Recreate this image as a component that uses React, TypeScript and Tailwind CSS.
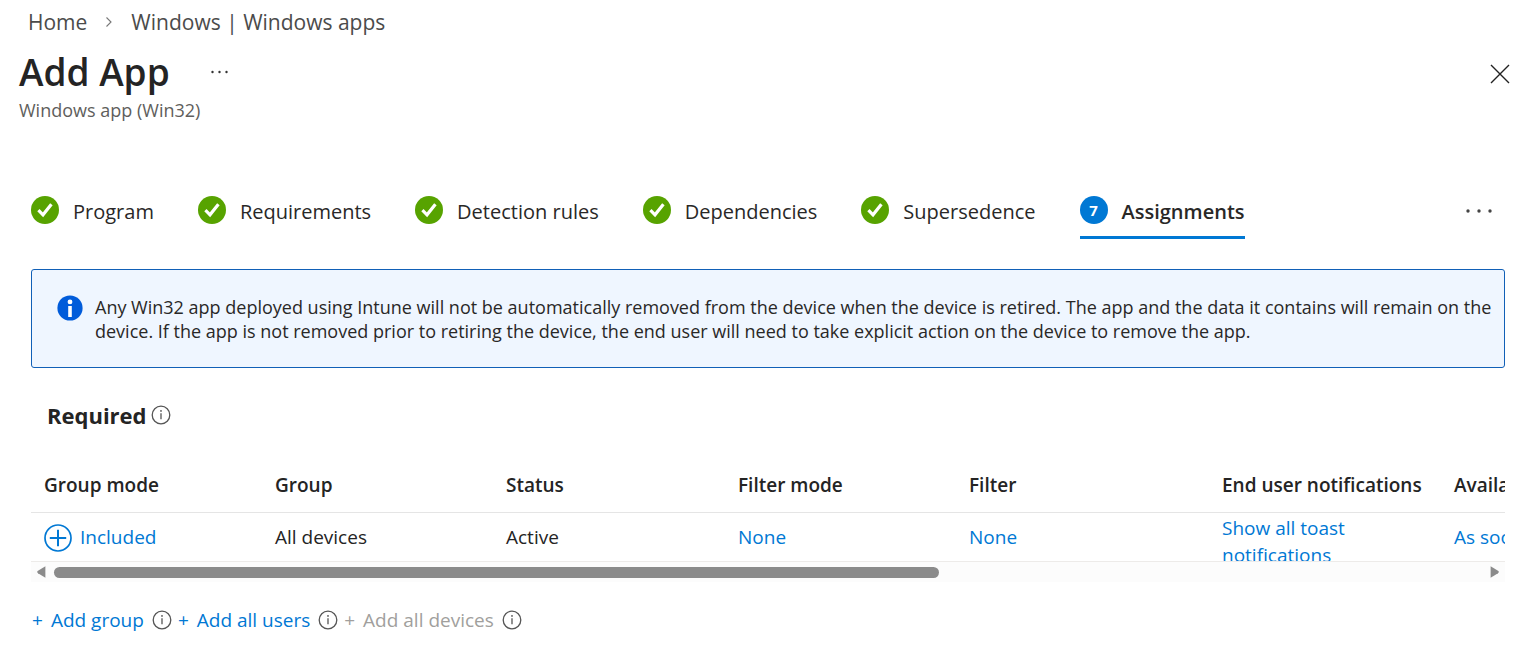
import clsx from 'clsx'

const completedSteps = [
  'Program',
  'Requirements',
  'Detection rules',
  'Dependencies',
  'Supersedence',
]

const columns = [
  { title: 'Group mode', width: 'w-[231px]' },
  { title: 'Group', width: 'w-[231px]' },
  { title: 'Status', width: 'w-[232px]' },
  { title: 'Filter mode', width: 'w-[231px]' },
  { title: 'Filter', width: 'w-[253px]' },
  { title: 'End user notifications', width: 'w-[232px]' },
  { title: 'Availability', width: 'w-[232px]' },
]

const addLinks = [
  { label: 'Add group', disabled: false },
  { label: 'Add all users', disabled: false },
  { label: 'Add all devices', disabled: true },
]

function CheckIcon() {
  return (
    <svg viewBox="0 0 28 28" className="size-7 shrink-0" aria-hidden="true">
      <circle cx="14" cy="14" r="14" fill="#57a300" />
      <path d="M7.4 14.2l4.6 4.6L20.4 8.2" fill="none" stroke="#fff" strokeWidth="3.2" />
    </svg>
  )
}

function InfoButton({ label }: { label: string }) {
  return (
    <button type="button" aria-label={label} className="size-5 shrink-0 cursor-pointer">
      <svg viewBox="0 0 20 20" className="size-5" aria-hidden="true">
        <circle cx="10" cy="10" r="8.8" fill="none" stroke="#555" strokeWidth="1.3" />
        <path d="M10 8.2v6" stroke="#555" strokeWidth="1.3" />
        <circle cx="10" cy="5.9" r="0.9" fill="#555" />
      </svg>
    </button>
  )
}

function Breadcrumb() {
  return (
    <nav aria-label="Breadcrumb" className="flex items-center pl-7 text-[21px] leading-7 text-[#4b4b4b]">
      <a href="#home">Home</a>
      <svg viewBox="0 0 8 12" className="mx-[18px] h-3 w-2" aria-hidden="true">
        <path d="M1.5 1.5L6 6l-4.5 4.5" fill="none" stroke="#777" strokeWidth="1.1" />
      </svg>
      <a href="#windows-apps">Windows | Windows apps</a>
    </nav>
  )
}

function PageHeader() {
  return (
    <header className="flex items-start justify-between pr-5 pl-[19px]">
      <div>
        <div className="flex items-center gap-10">
          <h1 className="text-[37px] leading-12 font-semibold text-[#242424]">Add App</h1>
          <button type="button" aria-label="More actions">
            <svg viewBox="0 0 20 4" className="h-1 w-5" fill="#333" aria-hidden="true">
              <circle cx="2.5" cy="2" r="1.2" />
              <circle cx="9.5" cy="2" r="1.2" />
              <circle cx="16.5" cy="2" r="1.2" />
            </svg>
          </button>
        </div>
        <p className="mt-[2px] text-lg leading-6 text-[#605e5c]">Windows app (Win32)</p>
      </div>
      <button type="button" aria-label="Close" className="mt-4">
        <svg viewBox="0 0 20 20" className="size-5" aria-hidden="true">
          <path d="M1 1l18 18M19 1L1 19" stroke="#222" strokeWidth="1.4" />
        </svg>
      </button>
    </header>
  )
}

function WizardSteps() {
  return (
    <div className="flex items-start justify-between pr-3">
      <ol className="flex gap-11 text-xl leading-7 text-[#292827]">
        {completedSteps.map((step) => (
          <li key={step}>
            <button type="button" className="flex gap-[14px] whitespace-nowrap">
              <CheckIcon />
              <span className="pt-[2px]">{step}</span>
            </button>
          </li>
        ))}
        <li className="border-b-3 border-[#0078d4] pb-[10px]">
          <button type="button" aria-current="step" className="flex gap-[14px] font-semibold whitespace-nowrap">
            <span className="flex size-7 items-center justify-center rounded-full bg-[#0078d4] text-[15px] leading-5 font-bold text-white">
              7
            </span>
            <span className="pt-[2px]">Assignments</span>
          </button>
        </li>
      </ol>
      <button type="button" aria-label="More steps" className="mt-3">
        <svg viewBox="0 0 28 6" className="h-[6px] w-7" fill="#444" aria-hidden="true">
          <circle cx="3" cy="3" r="1.7" />
          <circle cx="14" cy="3" r="1.7" />
          <circle cx="25" cy="3" r="1.7" />
        </svg>
      </button>
    </div>
  )
}

function InfoBanner() {
  return (
    <div role="note" className="mt-[30px] flex gap-3 rounded-[3px] border border-[#1160b7] bg-[#eff6ff] pt-[25px] pr-2 pb-6 pl-[25px]">
      <svg viewBox="0 0 26 26" className="size-[26px] shrink-0" aria-hidden="true">
        <circle cx="13" cy="13" r="12.6" fill="#015cda" />
        <circle cx="13" cy="6.9" r="2.4" fill="#fff" />
        <path d="M13 11v11" stroke="#fff" strokeWidth="3.6" />
      </svg>
      <p className="text-lg leading-6 text-[#292827]">
        Any Win32 app deployed using Intune will not be automatically removed from the device when the device is
        retired. The app and the data it contains will remain on the device. If the app is not removed prior to
        retiring the device, the end user will need to take explicit action on the device to remove the app.
      </p>
    </div>
  )
}

function AssignmentTable() {
  return (
    <div className="mt-7">
      <div className="h-[104px] overflow-hidden border-b border-[#edebe9]">
        <table className="w-[1642px] table-fixed text-left text-[19px] leading-[27px] text-[#242424]">
          <thead>
            <tr className="h-[54px] border-b border-[#e5e5e5]">
              {columns.map((column) => (
                <th key={column.title} scope="col" className={clsx('pt-[2px] pl-[13px] font-semibold whitespace-nowrap', column.width)}>
                  {column.title}
                </th>
              ))}
            </tr>
          </thead>
          <tbody>
            <tr className="align-top">
              <td className="pt-[11px] pl-[13px]">
                <a href="#included" className="flex items-center gap-2 text-[#0078d4]">
                  <svg viewBox="0 0 28 28" className="size-7" fill="none" stroke="#0078d4" aria-hidden="true">
                    <circle cx="14" cy="14" r="13" strokeWidth="1.7" />
                    <path d="M14 5.8v16.4M5.8 14h16.4" strokeWidth="2" />
                  </svg>
                  Included
                </a>
              </td>
              <td className="pt-[11px] pl-[13px]">All devices</td>
              <td className="pt-[11px] pl-[13px]">Active</td>
              <td className="pt-[11px] pl-[13px]">
                <a href="#filter-mode" className="text-[#0078d4]">None</a>
              </td>
              <td className="pt-[11px] pl-[13px]">
                <a href="#filter" className="text-[#0078d4]">None</a>
              </td>
              <td className="pt-[2px] pr-10 pl-[13px]">
                <a href="#notifications" className="text-[#0078d4]">Show all toast notifications</a>
              </td>
              <td className="pt-[11px] pl-[13px] whitespace-nowrap">
                <a href="#availability" className="text-[#0078d4]">As soon as possible</a>
              </td>
            </tr>
          </tbody>
        </table>
      </div>
      <div className="flex h-5 items-center gap-2 bg-[#fcfcfc] px-[6px]">
        <button type="button" aria-label="Scroll left">
          <svg viewBox="0 0 9 12" className="h-3 w-[9px]" fill="#8b8b8b" aria-hidden="true">
            <path d="M8.4.3v11.4L1 7.2Q-.6 6 1 4.8z" />
          </svg>
        </button>
        <div className="flex-1">
          <div className="h-[11px] w-[62%] rounded-full bg-[#8b8b8b]" />
        </div>
        <button type="button" aria-label="Scroll right">
          <svg viewBox="0 0 9 12" className="h-3 w-[9px]" fill="#8b8b8b" aria-hidden="true">
            <path d="M.6.3v11.4L8 7.2Q9.6 6 8 4.8z" />
          </svg>
        </button>
      </div>
    </div>
  )
}

export default function App() {
  return (
    <div className="min-h-screen overflow-x-hidden bg-white pt-2 pb-6 font-['Segoe_UI','Open_Sans',sans-serif]">
      <Breadcrumb />
      <div className="mt-3">
        <PageHeader />
      </div>

      <main className="mt-[74px] pr-[25px] pl-[31px]">
        <WizardSteps />
        <InfoBanner />

        <section aria-labelledby="required-heading">
          <div className="mt-8 flex items-center gap-1 pl-4">
            <h2 id="required-heading" className="text-[22px] leading-[30px] font-bold text-[#242424]">
              Required
            </h2>
            <InfoButton label="About required assignments" />
          </div>

          <AssignmentTable />

          <div className="mt-6 flex items-center gap-[6px] pl-px text-[19px] leading-7">
            {addLinks.map((link) => (
              <div key={link.label} className="flex items-center gap-2">
                <button
                  type="button"
                  disabled={link.disabled}
                  className={clsx(
                    'flex gap-2 whitespace-nowrap',
                    link.disabled ? 'text-[#a19f9d]' : 'text-[#0078d4]',
                  )}
                >
                  <span>+</span>
                  <span>{link.label}</span>
                </button>
                <InfoButton label={`About ${link.label.toLowerCase()}`} />
              </div>
            ))}
          </div>
        </section>
      </main>
    </div>
  )
}
